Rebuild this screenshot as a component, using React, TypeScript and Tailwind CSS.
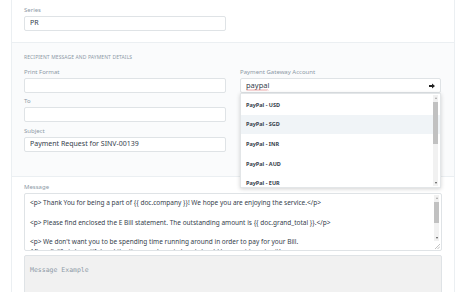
import React from "react";

const font = { fontFamily: '"Noto Sans", "Open Sans", sans-serif' };

function Label({ children }: { children: React.ReactNode }) {
  return <div className="text-[6px] leading-[8px] text-[#8d99a6] mb-[2px]">{children}</div>;
}

function Input({ children }: { children?: React.ReactNode }) {
  return (
    <div className="h-[15px] border border-[#dfe3e6] bg-white rounded-[2px] px-[5px] flex items-center text-[7px] text-[#36414c]">
      {children}
    </div>
  );
}

function Scrollbar({ thumbTop, thumbH }: { thumbTop: number; thumbH: number }) {
  return (
    <div className="absolute right-[2px] top-[1px] bottom-[1px] w-[5px] bg-[#f1f1f1] flex flex-col items-center">
      <div className="h-[6px] w-full flex items-center justify-center">
        <div className="w-0 h-0 border-l-[1.5px] border-r-[1.5px] border-b-[2px] border-l-transparent border-r-transparent border-b-[#a3a3a3]" />
      </div>
      <div className="flex-1 w-full relative">
        <div className="absolute left-0 right-0 bg-[#c1c1c1]" style={{ top: thumbTop, height: thumbH }} />
      </div>
      <div className="h-[6px] w-full flex items-center justify-center">
        <div className="w-0 h-0 border-l-[1.5px] border-r-[1.5px] border-t-[2px] border-l-transparent border-r-transparent border-t-[#505050]" />
      </div>
    </div>
  );
}

export default function App() {
  const items = ["PayPal - USD", "PayPal - SGD", "PayPal - INR", "PayPal - AUD", "PayPal - EUR"];
  return (
    <div className="w-[474px] h-[292px] overflow-hidden bg-white relative" style={font}>
      <div className="ml-[11px] w-[444px] h-[292px] border-x border-[#ebeff2] flex flex-col">
        {/* Series */}
        <div className="shrink-0 px-[12px] pt-[6px] h-[42px]">
          <div className="w-[202px]">
            <Label>Series</Label>
            <Input>PR</Input>
          </div>
        </div>
        {/* Gray section */}
        <div className="shrink-0 bg-[#fafbfc] border-y border-[#ebeff2] h-[135px] px-[12px] pt-[11px]">
          <div className="text-[5px] leading-[7px] tracking-[0.1px] text-[#8d99a6] uppercase mb-[7px]">
            Recipient Message and Payment Details
          </div>
          <div className="flex gap-[14px]">
            <div className="w-[202px] flex flex-col gap-[4px]">
              <div>
                <Label>Print Format</Label>
                <Input />
              </div>
              <div>
                <Label>To</Label>
                <Input />
              </div>
              <div className="mt-[1px]">
                <Label>Subject</Label>
                <Input>Payment Request for SINV-00139</Input>
              </div>
            </div>
            <div className="w-[201px] relative">
              <Label>Payment Gateway Account</Label>
              <div className="h-[15px] border border-[#dfe3e6] bg-white rounded-[2px] px-[5px] flex items-center justify-between text-[7.5px] text-[#36414c]">
                <span className="relative leading-[9px]">
                  paypal
                  <svg className="absolute left-0 top-[8px]" width="23" height="2" viewBox="0 0 23 2">
                    <path d="M0 1.5 L1 0.5 L2 1.5 L3 0.5 L4 1.5 L5 0.5 L6 1.5 L7 0.5 L8 1.5 L9 0.5 L10 1.5 L11 0.5 L12 1.5 L13 0.5 L14 1.5 L15 0.5 L16 1.5 L17 0.5 L18 1.5 L19 0.5 L20 1.5 L21 0.5 L22 1.5" stroke="#e06666" strokeWidth="0.6" fill="none" />
                  </svg>
                </span>
                <svg width="6" height="6" viewBox="0 0 10 10">
                  <path d="M0 3.5 H5 V1 L10 5 L5 9 V6.5 H0 Z" fill="#222" />
                </svg>
              </div>
              <div className="absolute left-0 top-[25px] w-[201px] h-[95px] bg-white border border-[#e3e6e8] shadow-[0_1px_4px_rgba(0,0,0,0.18)] z-10 overflow-hidden">
                <div className="flex flex-col pt-[1px]">
                  {items.map((it, i) => (
                    <div
                      key={it}
                      className={`h-[19.7px] flex items-center px-[5px] text-[5.5px] font-bold text-[#36414c] ${i === 1 ? "bg-[#f0f4f7]" : ""}`}
                    >
                      {it}
                    </div>
                  ))}
                </div>
                <Scrollbar thumbTop={1} thumbH={42} />
              </div>
            </div>
          </div>
        </div>
        {/* Message */}
        <div className="shrink-0 px-[12px] pt-[6px]">
          <Label>Message</Label>
          <div className="relative h-[58px] border border-[#dfe3e6] bg-white rounded-[2px] overflow-hidden">
            <div className="px-[5px] pt-[4px] text-[6.5px] leading-[9.8px] text-[#36414c] whitespace-nowrap">
              <div>&lt;p&gt; Thank You for being a part of {"{{"} doc.company {"}}"}! We hope you are enjoying the service.&lt;/p&gt;</div>
              <div>&nbsp;</div>
              <div>&lt;p&gt; Please find enclosed the E Bill statement. The outstanding amount is {"{{"} doc.grand_total {"}}"}.&lt;/p&gt;</div>
              <div>&nbsp;</div>
              <div>&lt;p&gt; We don't want you to be spending time running around in order to pay for your Bill.</div>
              <div>After all, life is beautiful and the time you have in hand should be spent to enjoy it!</div>
            </div>
            <div className="absolute right-[2px] top-[1px] h-[46px] w-[5px] bg-[#f1f1f1] flex flex-col items-center">
              <div className="h-[6px] w-full flex items-center justify-center">
                <div className="w-0 h-0 border-l-[1.5px] border-r-[1.5px] border-b-[2px] border-l-transparent border-r-transparent border-b-[#a3a3a3]" />
              </div>
              <div className="flex-1 w-full relative">
                <div className="absolute left-0 right-0 top-[1px] h-[21px] bg-[#c1c1c1]" />
              </div>
              <div className="h-[6px] w-full flex items-center justify-center">
                <div className="w-0 h-0 border-l-[1.5px] border-r-[1.5px] border-t-[2px] border-l-transparent border-r-transparent border-t-[#505050]" />
              </div>
            </div>
            <svg className="absolute right-[1px] bottom-[1px]" width="5" height="5" viewBox="0 0 5 5">
              <path d="M5 0 L0 5 M5 2.5 L2.5 5" stroke="#999" strokeWidth="0.6" />
            </svg>
          </div>
          <div className="mt-[4px] h-[60px] border border-[#dfe3e6] bg-[#f1f1f1] rounded-[2px] px-[5px] pt-[10px]">
            <div className="text-[6.5px] text-[#8d99a6]" style={{ fontFamily: '"DejaVu Sans Mono", "Liberation Mono", monospace' }}>
              Message Example
            </div>
          </div>
        </div>
      </div>
    </div>
  );
}
